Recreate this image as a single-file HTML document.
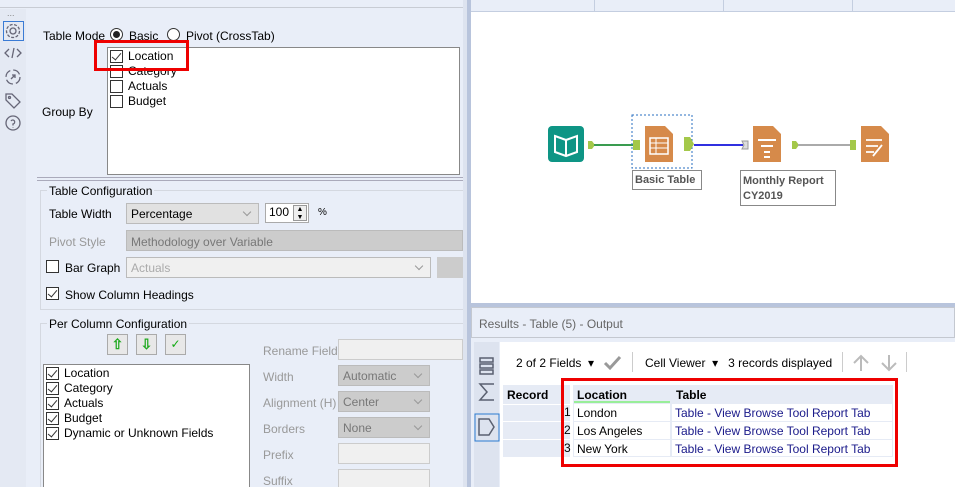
<!DOCTYPE html>
<html><head><meta charset="utf-8"><style>
*{box-sizing:border-box;margin:0;padding:0}
html,body{width:955px;height:487px;overflow:hidden}
body{background:#e9eef8;font-family:"Liberation Sans",sans-serif;font-size:12px;color:#000;position:relative}
.a{position:absolute;white-space:nowrap}
.cb{position:absolute;width:13px;height:13px;border:1px solid #333;background:#fff}
.cb.on::after{content:"";position:absolute;left:3px;top:0px;width:4px;height:8px;border-right:1.5px solid #333;border-bottom:1.5px solid #333;transform:rotate(40deg)}
.g{color:#999}
.dd{position:absolute;background:#ccc;border:1px solid #bbb;color:#777;padding:3px 4px;font-size:12px}
.dd::after{content:"";position:absolute;right:8px;top:5px;width:5px;height:5px;border-right:1px solid #999;border-bottom:1px solid #999;transform:rotate(45deg)}
.box{position:absolute;border:1px solid #ccc;background:#f0f0f0}
</style></head><body>
<div class="a" style="left:0;top:0;width:466px;height:8px;border-bottom:1px solid #c8ccd4;background:#e9eef8"></div>
<div class="a" style="left:0;top:9px;width:26px;height:478px;background:#e4e9f3"></div>
<div class="a" style="left:7px;top:8px;color:#888;font-size:9px">...</div>
<div class="a" style="left:3px;top:21px;width:21px;height:20px;border:1px solid #3a7bd5"></div>
<svg class="a" style="left:0;top:20px" width="26" height="115" fill="none" stroke="#667" stroke-width="1.3">
<circle cx="13" cy="11" r="3"/><circle cx="13" cy="11" r="6.5" stroke-dasharray="3 1.5"/>
<path d="M9 29l-4 4 4 4M17 29l4 4-4 4M14 28l-2 10"/>
<circle cx="13" cy="57" r="7" stroke-dasharray="8 3"/><path d="M11 59l4-4M12 55h3v3"/>
<path d="M6 74v6l8 8 6-6-8-8z"/><circle cx="9.5" cy="77.5" r="1"/>
<circle cx="13" cy="103" r="7"/><path d="M11 101a2 2 0 1 1 2 3v1.5M13 107.5v.5"/>
</svg>
<div class="a" style="left:43px;top:29px">Table Mode</div>
<div class="a" style="left:110px;top:28px;width:13px;height:13px;border:1px solid #333;border-radius:50%;background:#fff"><div style="width:7px;height:7px;background:#222;border-radius:50%;margin:2px"></div></div>
<div class="a" style="left:129px;top:29px">Basic</div>
<div class="a" style="left:167px;top:28px;width:13px;height:13px;border:1px solid #333;border-radius:50%;background:#fff"></div>
<div class="a" style="left:186px;top:29px">Pivot (CrossTab)</div>
<div class="a" style="left:107px;top:47px;width:353px;height:128px;background:#fff;border:1px solid #888"></div>
<div class="cb on" style="left:110px;top:50px"></div><div class="a" style="left:128px;top:49px">Location</div>
<div class="cb" style="left:110px;top:65px"></div><div class="a" style="left:128px;top:64px">Category</div>
<div class="cb" style="left:110px;top:80px"></div><div class="a" style="left:128px;top:79px">Actuals</div>
<div class="cb" style="left:110px;top:95px"></div><div class="a" style="left:128px;top:94px">Budget</div>
<div class="a" style="left:94px;top:40px;width:95px;height:31px;border:3px solid #e00"></div>
<div class="a" style="left:42px;top:105px">Group By</div>
<div class="a" style="left:37px;top:177px;width:426px;height:4px;border-top:1px solid #aab;border-bottom:1px solid #aab"></div>
<div class="a" style="left:40px;top:190px;width:423px;height:120px;border:1px solid #d4d8e0;border-right:none"></div>
<div class="a" style="left:47px;top:184px;background:#e9eef8;padding:0 2px">Table Configuration</div>
<div class="a" style="left:49px;top:207px">Table Width</div>
<div class="dd" style="left:126px;top:203px;width:133px;height:21px;background:#e1e1e1;color:#000">Percentage</div>
<div class="a" style="left:265px;top:203px;width:44px;height:20px;background:#fff;border:1px solid #aaa;padding:1px 3px">100</div>
<div class="a" style="left:293px;top:205px;width:14px;height:16px;border:1px solid #999;background:#eee;font-size:7px;line-height:8px;text-align:center">▲<br>▼</div>
<div class="a" style="left:318px;top:207px;font-size:10px">%</div>
<div class="a g" style="left:49px;top:235px">Pivot Style</div>
<div class="a" style="left:126px;top:230px;width:337px;height:21px;background:#ccc;border:1px solid #bbb;color:#777;padding:4px 4px">Methodology over Variable</div>
<div class="cb" style="left:46px;top:260px"></div><div class="a" style="left:65px;top:261px">Bar Graph</div>
<div class="dd" style="left:126px;top:257px;width:305px;height:21px;background:#f0f0f0;color:#aaa">Actuals</div>
<div class="a" style="left:437px;top:257px;width:26px;height:21px;background:#ccc"></div>
<div class="cb on" style="left:46px;top:287px"></div><div class="a" style="left:65px;top:288px">Show Column Headings</div>
<div class="a" style="left:40px;top:323px;width:423px;height:170px;border:1px solid #d4d8e0;border-right:none"></div>
<div class="a" style="left:47px;top:317px;background:#e9eef8;padding:0 2px">Per Column Configuration</div>
<div class="a" style="left:107px;top:334px;width:21px;height:21px;border:1px solid #aaa;background:#e8e8e8;color:#2a2;text-align:center;font-weight:bold;font-size:14px;line-height:19px">⇧</div>
<div class="a" style="left:136px;top:334px;width:21px;height:21px;border:1px solid #aaa;background:#e8e8e8;color:#2a2;text-align:center;font-weight:bold;font-size:14px;line-height:19px">⇩</div>
<div class="a" style="left:165px;top:334px;width:21px;height:21px;border:1px solid #aaa;background:#e8e8e8;color:#1a1;text-align:center;font-size:12px;line-height:19px">✓</div>
<div class="a" style="left:43px;top:364px;width:207px;height:130px;background:#fff;border:1px solid #888"></div>
<div class="cb on" style="left:46px;top:367px"></div><div class="a" style="left:64px;top:366px">Location</div>
<div class="cb on" style="left:46px;top:382px"></div><div class="a" style="left:64px;top:381px">Category</div>
<div class="cb on" style="left:46px;top:397px"></div><div class="a" style="left:64px;top:396px">Actuals</div>
<div class="cb on" style="left:46px;top:412px"></div><div class="a" style="left:64px;top:411px">Budget</div>
<div class="cb on" style="left:46px;top:427px"></div><div class="a" style="left:64px;top:426px">Dynamic or Unknown Fields</div>
<div class="a g" style="left:263px;top:344px">Rename Field</div>
<div class="box" style="left:338px;top:339px;width:125px;height:21px"></div>
<div class="a g" style="left:263px;top:370px">Width</div>
<div class="dd" style="left:338px;top:365px;width:92px;height:21px">Automatic</div>
<div class="a g" style="left:263px;top:396px">Alignment (H)</div>
<div class="dd" style="left:338px;top:391px;width:92px;height:21px">Center</div>
<div class="a g" style="left:263px;top:422px">Borders</div>
<div class="dd" style="left:338px;top:417px;width:92px;height:21px">None</div>
<div class="a g" style="left:263px;top:448px">Prefix</div>
<div class="box" style="left:338px;top:443px;width:92px;height:21px"></div>
<div class="a g" style="left:263px;top:474px">Suffix</div>
<div class="box" style="left:338px;top:469px;width:92px;height:21px"></div>
<div class="a" style="left:463px;top:0;width:4px;height:487px;background:#dde3ef"></div>
<div class="a" style="left:467px;top:0;width:4px;height:487px;background:#b8c4dc"></div>
<div class="a" style="left:471px;top:0;width:484px;height:303px;background:#fff"></div>
<div class="a" style="left:471px;top:0;width:484px;height:12px;background:#e9eef8;border-bottom:1px solid #c4cee0"></div>
<div class="a" style="left:594px;top:0;width:1px;height:12px;background:#c4cee0"></div>
<div class="a" style="left:723px;top:0;width:1px;height:12px;background:#c4cee0"></div>
<div class="a" style="left:852px;top:0;width:1px;height:12px;background:#c4cee0"></div>
<svg class="a" style="left:530px;top:100px" width="380" height="110">
<rect x="18" y="26" width="36" height="36" rx="4" fill="#0e9585"/>
<path d="M25 36l11 4 11-4v16l-11 4-11-4z" fill="none" stroke="#fff" stroke-width="2"/><path d="M36 40v16" stroke="#fff" stroke-width="2"/>
<path d="M58 41h4l3 4-3 4h-4z" fill="#a4c84a"/>
<line x1="64" y1="45" x2="103" y2="45" stroke="#3a9c50" stroke-width="2"/>
<rect x="102" y="15" width="60" height="53" fill="none" stroke="#2a6fc0" stroke-dasharray="2 2"/>
<rect x="103" y="40" width="7" height="10" fill="#a4c84a"/>
<path d="M115 26h20l8 8v28h-28z" fill="#d68a4a"/><rect x="120" y="38" width="18" height="16" fill="none" stroke="#fff" stroke-width="1.5"/><path d="M120 43h18M120 48h18M126 38v16" stroke="#fff"/>
<path d="M154 37h6l4 7-4 7h-6z" fill="#a4c84a"/>
<line x1="164" y1="45" x2="213" y2="45" stroke="#3030e0" stroke-width="2"/>
<path d="M212 41h6v8h-6l2-4z" fill="#ddd" stroke="#999"/>
<path d="M223 26h20l8 8v28h-28z" fill="#d68a4a"/><path d="M228 40h18M231 46h12M234 52h6M234 57h6" stroke="#fff" stroke-width="2"/>
<path d="M262 41h4l3 4-3 4h-4z" fill="#a4c84a"/>
<line x1="268" y1="45" x2="322" y2="45" stroke="#aaa" stroke-width="2"/>
<rect x="320" y="40" width="6" height="10" fill="#a4c84a"/>
<path d="M331 26h20l8 8v28h-28z" fill="#d68a4a"/><path d="M336 40h16M336 46h12M336 52h8M343 56l9-11" stroke="#fff" stroke-width="1.8"/>
</svg>
<div class="a" style="left:632px;top:170px;width:70px;height:20px;border:1px solid #888;background:#fff;color:#555;font-weight:bold;font-size:11px;padding:3px 2px">Basic Table</div>
<div class="a" style="left:740px;top:170px;width:96px;height:36px;border:1px solid #888;background:#fff;color:#555;font-weight:bold;font-size:11px;padding:3px 2px;line-height:15px;white-space:normal">Monthly Report CY2019</div>
<div class="a" style="left:471px;top:303px;width:484px;height:4px;background:#b8c4dc"></div>
<div class="a" style="left:471px;top:307px;width:484px;height:31px;background:#e9eef8;border:1px solid #c4c8d0;color:#666;padding:9px 7px">Results - Table (5) - Output</div>
<div class="a" style="left:474px;top:342px;width:25px;height:145px;background:#dde3ef"></div>
<svg class="a" style="left:474px;top:342px" width="26" height="100" fill="none" stroke="#5a6070" stroke-width="1.5">
<path d="M6 16h13v4H6zM6 22h13v4H6zM6 28h13v4H6z"/>
<path d="M20 42H6l7 8-7 8h14"/>
<rect x="1" y="72" width="24" height="27" stroke="#2a7bd0" stroke-width="1"/>
<path d="M5 77h10l5 8-5 8H5z"/>
</svg>
<div class="a" style="left:500px;top:342px;width:455px;height:40px;background:#fff"></div>
<div class="a" style="left:516px;top:356px">2 of 2 Fields &nbsp;▾</div>
<svg class="a" style="left:603px;top:355px" width="20" height="16"><path d="M2 8l5 5 10-11" fill="none" stroke="#999" stroke-width="3"/></svg>
<div class="a" style="left:632px;top:352px;width:1px;height:20px;background:#ccc"></div>
<div class="a" style="left:645px;top:356px">Cell Viewer &nbsp;▾ &nbsp; 3 records displayed</div>
<div class="a" style="left:842px;top:352px;width:1px;height:20px;background:#ccc"></div>
<svg class="a" style="left:850px;top:353px" width="52" height="20" fill="none" stroke="#bbb" stroke-width="2"><path d="M11 18V3M4 10l7-7 7 7M39 2v15M32 10l7 7 7-7"/></svg>
<div class="a" style="left:906px;top:352px;width:1px;height:20px;background:#ccc"></div>
<div class="a" style="left:500px;top:382px;width:455px;height:105px;background:#fff"></div>
<div class="a" style="left:503px;top:385px;width:67px;height:19px;background:#e6ebf5;font-weight:bold;padding:3px 4px">Record</div>
<div class="a" style="left:503px;top:404px;width:67px;height:17px;background:#e6ebf5;border-top:1px solid #fff"></div>
<div class="a" style="left:503px;top:421px;width:67px;height:18px;background:#e6ebf5;border-top:1px solid #fff"></div>
<div class="a" style="left:503px;top:439px;width:67px;height:18px;background:#e6ebf5;border-top:1px solid #fff"></div>
<div class="a" style="left:573px;top:385px;width:320px;height:72px;background:#e6ebf5"></div>
<div class="a" style="left:574px;top:386px;width:96px;height:17px;font-weight:bold;padding:2px 3px;border-bottom:2px solid #9e9">Location</div>
<div class="a" style="left:673px;top:386px;font-weight:bold;padding:2px 3px">Table</div>
<div class="a" style="left:564px;top:405px">1</div><div class="a" style="left:564px;top:423px">2</div><div class="a" style="left:564px;top:441px">3</div>
<div class="a" style="left:574px;top:404px;width:96px;height:17px;background:#fff;padding:2px 3px">London</div>
<div class="a" style="left:672px;top:404px;width:220px;height:17px;background:#fff;padding:2px 3px;color:#1a1a8a">Table - View Browse Tool Report Tab</div>
<div class="a" style="left:574px;top:422px;width:96px;height:17px;background:#fff;padding:2px 3px">Los Angeles</div>
<div class="a" style="left:672px;top:422px;width:220px;height:17px;background:#fff;padding:2px 3px;color:#1a1a8a">Table - View Browse Tool Report Tab</div>
<div class="a" style="left:574px;top:440px;width:96px;height:16px;background:#fff;padding:2px 3px">New York</div>
<div class="a" style="left:672px;top:440px;width:220px;height:16px;background:#fff;padding:2px 3px;color:#1a1a8a">Table - View Browse Tool Report Tab</div>
<div class="a" style="left:561px;top:378px;width:337px;height:89px;border:3px solid #e00"></div>
</body></html>
